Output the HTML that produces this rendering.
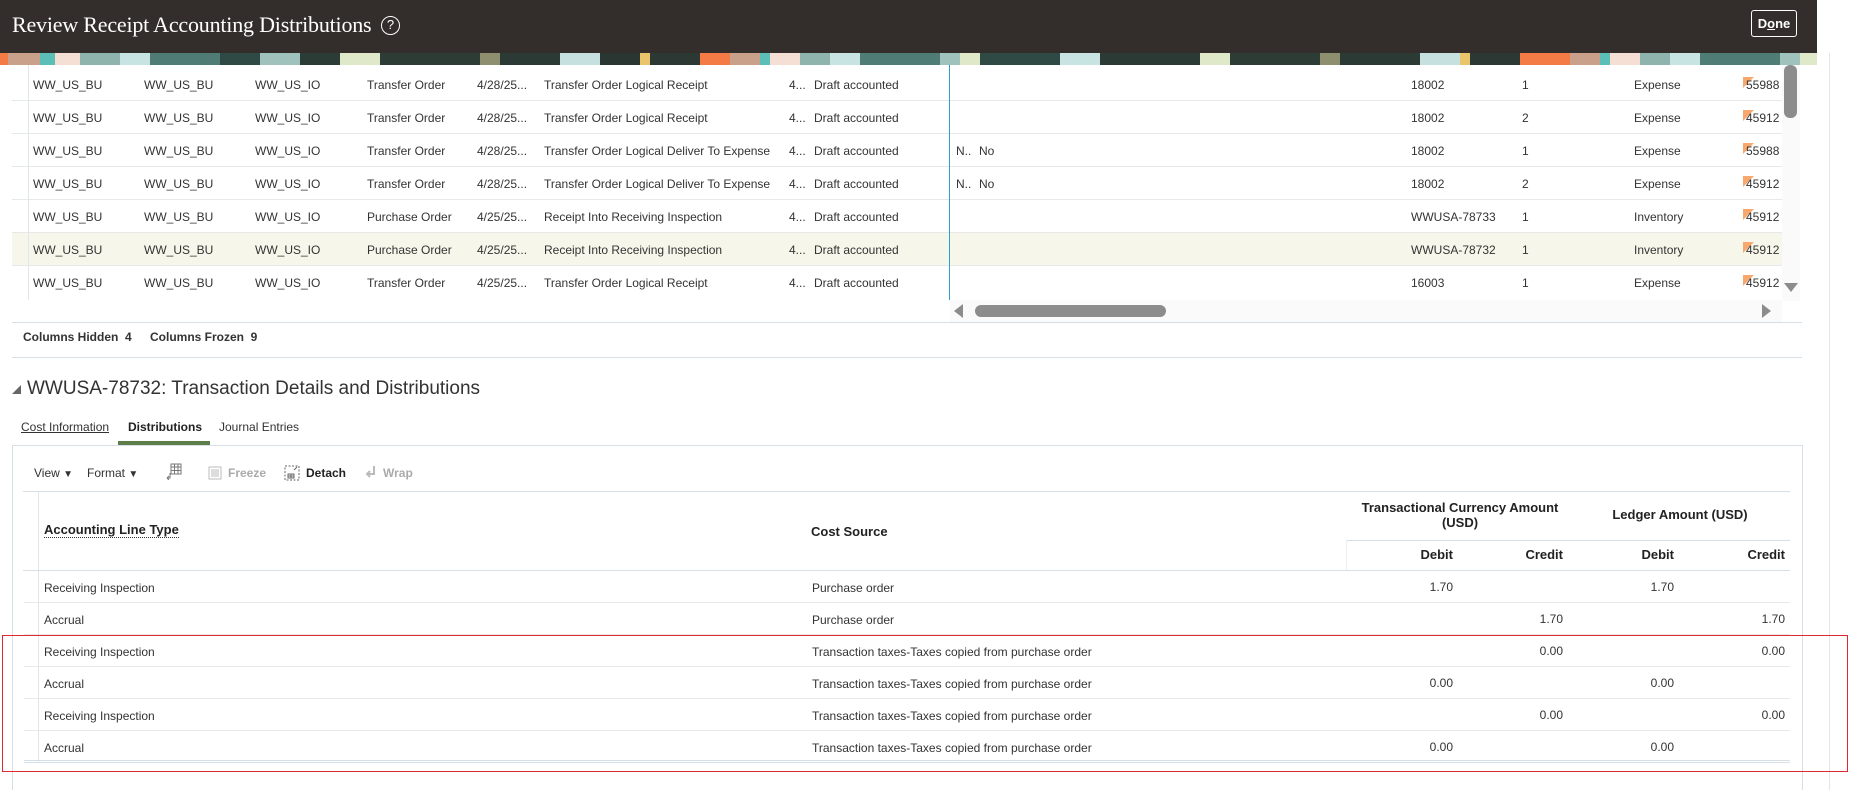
<!DOCTYPE html>
<html><head><meta charset="utf-8"><style>
*{margin:0;padding:0;box-sizing:border-box}
html,body{width:1850px;height:790px;overflow:hidden}
body{position:relative;background:#fff;font-family:"Liberation Sans",Arial,sans-serif;color:#333;font-size:12px}
.a{position:absolute;white-space:nowrap}
.hdr{left:0;top:0;width:1817px;height:53px;background:#332e2b}
.ban{left:0;top:53px;width:1817px;height:12px;background:linear-gradient(90deg,#f47b45 0 8px,#c9a08a 8px 40px,#5bbfb8 40px 55px,#f5ded4 55px 80px,#8fb3ad 80px 120px,#c7e3e2 120px 150px,#4f7d76 150px 220px,#2f4a45 220px 260px,#9fc2bd 260px 300px,#2b3b36 300px 340px,#dfe8c8 340px 380px,#2e3c36 380px 480px,#8d8f6e 480px 500px,#2c3a35 500px 560px,#c6e0df 560px 600px,#2a3631 600px 640px,#e9c46a 640px 650px,#2b3833 650px 700px,#f47b45 700px 730px,#c9a08a 730px 760px,#5bbfb8 760px 770px,#f5ded4 770px 800px,#8fb3ad 800px 830px,#c7e3e2 830px 860px,#4f7d76 860px 940px,#9fc2bd 940px 960px,#dfe8c8 960px 980px,#2f4a45 980px 1060px,#c7e3e2 1060px 1100px,#2c3a35 1100px 1200px,#dfe8c8 1200px 1230px,#2e3c36 1230px 1320px,#8d8f6e 1320px 1340px,#2c3a35 1340px 1420px,#c6e0df 1420px 1460px,#e9c46a 1460px 1470px,#2b3833 1470px 1520px,#f47b45 1520px 1570px,#c9a08a 1570px 1600px,#5bbfb8 1600px 1610px,#f5ded4 1610px 1640px,#8fb3ad 1640px 1670px,#c7e3e2 1670px 1700px,#4f7d76 1700px 1780px,#9fc2bd 1780px 1800px,#dfe8c8 1800px 1817px)}
.title{left:12px;top:12px;font-family:"Liberation Serif",serif;font-size:22px;color:#fff;letter-spacing:-0.2px}
.help{left:381px;top:16px;width:19px;height:19px;border:1.5px solid #fff;border-radius:50%;color:#fff;font-size:13px;text-align:center;line-height:16px}
.done{left:1751px;top:10px;width:46px;height:27px;border:1px solid #fff;border-radius:3px;color:#fff;font-weight:bold;font-size:13px;text-align:center;line-height:25px}
.row{left:12px;width:1770px;height:33px;border-bottom:1px solid #e6e8ea}
.hl{background:#f6f7ea}
.c{position:absolute;top:10px;white-space:nowrap}
.flag{position:absolute;width:0;height:0;border-top:11px solid #f9a86d;border-right:11px solid transparent;top:9px}
.ln{position:absolute;background:#d6dfe6}
.b{font-weight:bold}
.drow{left:24px;width:1766px;height:32px;border-bottom:1px solid #e6e8ea}
.num{position:absolute;top:9px;text-align:right;width:80px}
</style></head><body>
<div class="a hdr"></div>
<div class="a ban"></div>
<div class="a title">Review Receipt Accounting Distributions</div>
<div class="a help">?</div>
<div class="a done">D<u>o</u>ne</div>
<div class="ln" style="left:1829px;top:53px;width:1px;height:737px;background:#dfe6ec"></div>

<div class="a row" style="top:68px"><span class="c" style="left:21px">WW_US_BU</span><span class="c" style="left:132px">WW_US_BU</span><span class="c" style="left:243px">WW_US_IO</span><span class="c" style="left:355px">Transfer Order</span><span class="c" style="left:465px">4/28/25...</span><span class="c" style="left:532px">Transfer Order Logical Receipt</span><span class="c" style="left:777px">4...</span><span class="c" style="left:802px">Draft accounted</span><span class="c" style="left:1399px">18002</span><span class="c" style="left:1510px">1</span><span class="c" style="left:1622px">Expense</span><i class="flag" style="left:1731px"></i><span class="c" style="left:1734px">55988</span></div>
<div class="a row" style="top:101px"><span class="c" style="left:21px">WW_US_BU</span><span class="c" style="left:132px">WW_US_BU</span><span class="c" style="left:243px">WW_US_IO</span><span class="c" style="left:355px">Transfer Order</span><span class="c" style="left:465px">4/28/25...</span><span class="c" style="left:532px">Transfer Order Logical Receipt</span><span class="c" style="left:777px">4...</span><span class="c" style="left:802px">Draft accounted</span><span class="c" style="left:1399px">18002</span><span class="c" style="left:1510px">2</span><span class="c" style="left:1622px">Expense</span><i class="flag" style="left:1731px"></i><span class="c" style="left:1734px">45912</span></div>
<div class="a row" style="top:134px"><span class="c" style="left:21px">WW_US_BU</span><span class="c" style="left:132px">WW_US_BU</span><span class="c" style="left:243px">WW_US_IO</span><span class="c" style="left:355px">Transfer Order</span><span class="c" style="left:465px">4/28/25...</span><span class="c" style="left:532px">Transfer Order Logical Deliver To Expense</span><span class="c" style="left:777px">4...</span><span class="c" style="left:802px">Draft accounted</span><span class="c" style="left:944px">N..</span><span class="c" style="left:967px">No</span><span class="c" style="left:1399px">18002</span><span class="c" style="left:1510px">1</span><span class="c" style="left:1622px">Expense</span><i class="flag" style="left:1731px"></i><span class="c" style="left:1734px">55988</span></div>
<div class="a row" style="top:167px"><span class="c" style="left:21px">WW_US_BU</span><span class="c" style="left:132px">WW_US_BU</span><span class="c" style="left:243px">WW_US_IO</span><span class="c" style="left:355px">Transfer Order</span><span class="c" style="left:465px">4/28/25...</span><span class="c" style="left:532px">Transfer Order Logical Deliver To Expense</span><span class="c" style="left:777px">4...</span><span class="c" style="left:802px">Draft accounted</span><span class="c" style="left:944px">N..</span><span class="c" style="left:967px">No</span><span class="c" style="left:1399px">18002</span><span class="c" style="left:1510px">2</span><span class="c" style="left:1622px">Expense</span><i class="flag" style="left:1731px"></i><span class="c" style="left:1734px">45912</span></div>
<div class="a row" style="top:200px"><span class="c" style="left:21px">WW_US_BU</span><span class="c" style="left:132px">WW_US_BU</span><span class="c" style="left:243px">WW_US_IO</span><span class="c" style="left:355px">Purchase Order</span><span class="c" style="left:465px">4/25/25...</span><span class="c" style="left:532px">Receipt Into Receiving Inspection</span><span class="c" style="left:777px">4...</span><span class="c" style="left:802px">Draft accounted</span><span class="c" style="left:1399px">WWUSA-78733</span><span class="c" style="left:1510px">1</span><span class="c" style="left:1622px">Inventory</span><i class="flag" style="left:1731px"></i><span class="c" style="left:1734px">45912</span></div>
<div class="a row hl" style="top:233px"><span class="c" style="left:21px">WW_US_BU</span><span class="c" style="left:132px">WW_US_BU</span><span class="c" style="left:243px">WW_US_IO</span><span class="c" style="left:355px">Purchase Order</span><span class="c" style="left:465px">4/25/25...</span><span class="c" style="left:532px">Receipt Into Receiving Inspection</span><span class="c" style="left:777px">4...</span><span class="c" style="left:802px">Draft accounted</span><span class="c" style="left:1399px">WWUSA-78732</span><span class="c" style="left:1510px">1</span><span class="c" style="left:1622px">Inventory</span><i class="flag" style="left:1731px"></i><span class="c" style="left:1734px">45912</span></div>
<div class="a row" style="top:266px;border-bottom:none"><span class="c" style="left:21px">WW_US_BU</span><span class="c" style="left:132px">WW_US_BU</span><span class="c" style="left:243px">WW_US_IO</span><span class="c" style="left:355px">Transfer Order</span><span class="c" style="left:465px">4/25/25...</span><span class="c" style="left:532px">Transfer Order Logical Receipt</span><span class="c" style="left:777px">4...</span><span class="c" style="left:802px">Draft accounted</span><span class="c" style="left:1399px">16003</span><span class="c" style="left:1510px">1</span><span class="c" style="left:1622px">Expense</span><i class="flag" style="left:1731px"></i><span class="c" style="left:1734px">45912</span></div>
<div class="ln" style="left:28px;top:65px;width:1px;height:235px;background:#dfe6ec"></div>
<div class="ln" style="left:949px;top:65px;width:1px;height:235px;background:#2a9fd0"></div>
<div class="ln" style="left:1782px;top:65px;width:18px;height:236px;background:#fafafa"></div>
<div class="ln" style="left:1784px;top:65px;width:13px;height:53px;background:#8c8c8c;border-radius:6px"></div>
<div class="a" style="left:1784px;top:283px;width:0;height:0;border-left:7px solid transparent;border-right:7px solid transparent;border-top:9px solid #8c8c8c"></div>
<div class="ln" style="left:950px;top:300px;width:832px;height:22px;background:#fafafa"></div>
<div class="a" style="left:954px;top:304px;width:0;height:0;border-top:7px solid transparent;border-bottom:7px solid transparent;border-right:9px solid #8c8c8c"></div>
<div class="ln" style="left:975px;top:305px;width:191px;height:12px;background:#8c8c8c;border-radius:6px"></div>
<div class="a" style="left:1762px;top:304px;width:0;height:0;border-top:7px solid transparent;border-bottom:7px solid transparent;border-left:9px solid #8c8c8c"></div>
<div class="ln" style="left:12px;top:322px;width:1790px;height:1px"></div>
<div class="a b" style="left:23px;top:330px;font-size:12px">Columns Hidden&nbsp; 4</div>
<div class="a b" style="left:150px;top:330px;font-size:12px">Columns Frozen&nbsp; 9</div>
<div class="ln" style="left:12px;top:357px;width:1790px;height:1px"></div>

<div class="a" style="left:12px;top:385px;width:0;height:0;border-left:9px solid transparent;border-bottom:9px solid #666"></div>
<div class="a" style="left:27px;top:378px;font-size:19px;color:#333">WWUSA-78732: Transaction Details and Distributions</div>
<div class="a" style="left:21px;top:420px;font-size:12px;text-decoration:underline">Cost Information</div>
<div class="a b" style="left:128px;top:420px;font-size:12px;color:#222">Distributions</div>
<div class="a" style="left:219px;top:420px;font-size:12px">Journal Entries</div>
<div class="a" style="left:12px;top:445px;width:1791px;height:345px;border:1px solid #d6dfe6;border-bottom:none"></div>
<div class="ln" style="left:118px;top:441px;width:92px;height:4px;background:#5d7d4a"></div>
<div class="a" style="left:34px;top:466px;font-size:12px">View <span style="font-size:10px">▼</span></div>
<div class="a" style="left:87px;top:466px;font-size:12px">Format <span style="font-size:10px">▼</span></div>
<svg class="a" style="left:166px;top:463px" width="16" height="17"><path d="M5 1h10v10H5zM5 4h10M5 7.5h10M8.5 1v10M12 1v10M4 10v5h-3M1 15l2-2M1 15l2 2" stroke="#777" fill="none"/></svg>
<svg class="a" style="left:208px;top:466px" width="14" height="14"><path d="M1 1h12v12H1zM4 3v8M6 3v8M8 3v8M10 3v8" stroke="#bbb" fill="none"/></svg>
<div class="a b" style="left:228px;top:466px;font-size:12px;color:#aaa">Freeze</div>
<svg class="a" style="left:284px;top:465px" width="16" height="16"><path d="M1 1h14v14H1z" stroke="#666" fill="none" stroke-dasharray="2 1.5"/><path d="M4 9h6v4H4zM4 11h6M7 9v4M10 5l3-3" stroke="#666" fill="none"/></svg>
<div class="a b" style="left:306px;top:466px;font-size:12px;color:#222">Detach</div>
<svg class="a" style="left:364px;top:465px" width="14" height="14"><path d="M10 1v8H4M6 6l-3 3 3 3" stroke="#bbb" stroke-width="2" fill="none"/></svg>
<div class="a b" style="left:383px;top:466px;font-size:12px;color:#aaa">Wrap</div>
<div class="ln" style="left:23px;top:491px;width:1767px;height:1px"></div>
<div class="ln" style="left:38px;top:491px;width:1px;height:272px;background:#dfe6ec"></div>
<div class="a b" style="left:44px;top:522px;font-size:13px;color:#222;border-bottom:1px dotted #333">Accounting Line Type</div>
<div class="a b" style="left:811px;top:524px;font-size:13px;color:#222">Cost Source</div>
<div class="a b" style="left:1348px;top:500px;width:224px;text-align:center;font-size:13px;color:#222;line-height:15px">Transactional Currency Amount<br>(USD)</div>
<div class="a b" style="left:1580px;top:507px;width:200px;text-align:center;font-size:13px;color:#222">Ledger Amount (USD)</div>
<div class="ln" style="left:1346px;top:540px;width:444px;height:1px"></div>
<div class="ln" style="left:1346px;top:540px;width:1px;height:30px;background:#eceff1"></div>
<div class="a b" style="left:1373px;top:547px;width:80px;text-align:right;color:#222;font-size:13px">Debit</div>
<div class="a b" style="left:1483px;top:547px;width:80px;text-align:right;color:#222;font-size:13px">Credit</div>
<div class="a b" style="left:1594px;top:547px;width:80px;text-align:right;color:#222;font-size:13px">Debit</div>
<div class="a b" style="left:1705px;top:547px;width:80px;text-align:right;color:#222;font-size:13px">Credit</div>
<div class="ln" style="left:23px;top:570px;width:1767px;height:1px"></div>

<div class="a drow" style="top:571px"><span class="c" style="left:20px">Receiving Inspection</span><span class="c" style="left:788px">Purchase order</span><span class="num" style="left:1349px">1.70</span><span class="num" style="left:1570px">1.70</span></div>
<div class="a drow" style="top:603px"><span class="c" style="left:20px">Accrual</span><span class="c" style="left:788px">Purchase order</span><span class="num" style="left:1459px">1.70</span><span class="num" style="left:1681px">1.70</span></div>
<div class="a drow" style="top:635px"><span class="c" style="left:20px">Receiving Inspection</span><span class="c" style="left:788px">Transaction taxes-Taxes copied from purchase order</span><span class="num" style="left:1459px">0.00</span><span class="num" style="left:1681px">0.00</span></div>
<div class="a drow" style="top:667px"><span class="c" style="left:20px">Accrual</span><span class="c" style="left:788px">Transaction taxes-Taxes copied from purchase order</span><span class="num" style="left:1349px">0.00</span><span class="num" style="left:1570px">0.00</span></div>
<div class="a drow" style="top:699px"><span class="c" style="left:20px">Receiving Inspection</span><span class="c" style="left:788px">Transaction taxes-Taxes copied from purchase order</span><span class="num" style="left:1459px">0.00</span><span class="num" style="left:1681px">0.00</span></div>
<div class="a drow" style="top:731px;border-bottom:3px double #d6dfe6"><span class="c" style="left:20px">Accrual</span><span class="c" style="left:788px">Transaction taxes-Taxes copied from purchase order</span><span class="num" style="left:1349px">0.00</span><span class="num" style="left:1570px">0.00</span></div>

<div class="a" style="left:2px;top:635px;width:1846px;height:137px;border:1.5px solid #e0282e"></div>
</body></html>
